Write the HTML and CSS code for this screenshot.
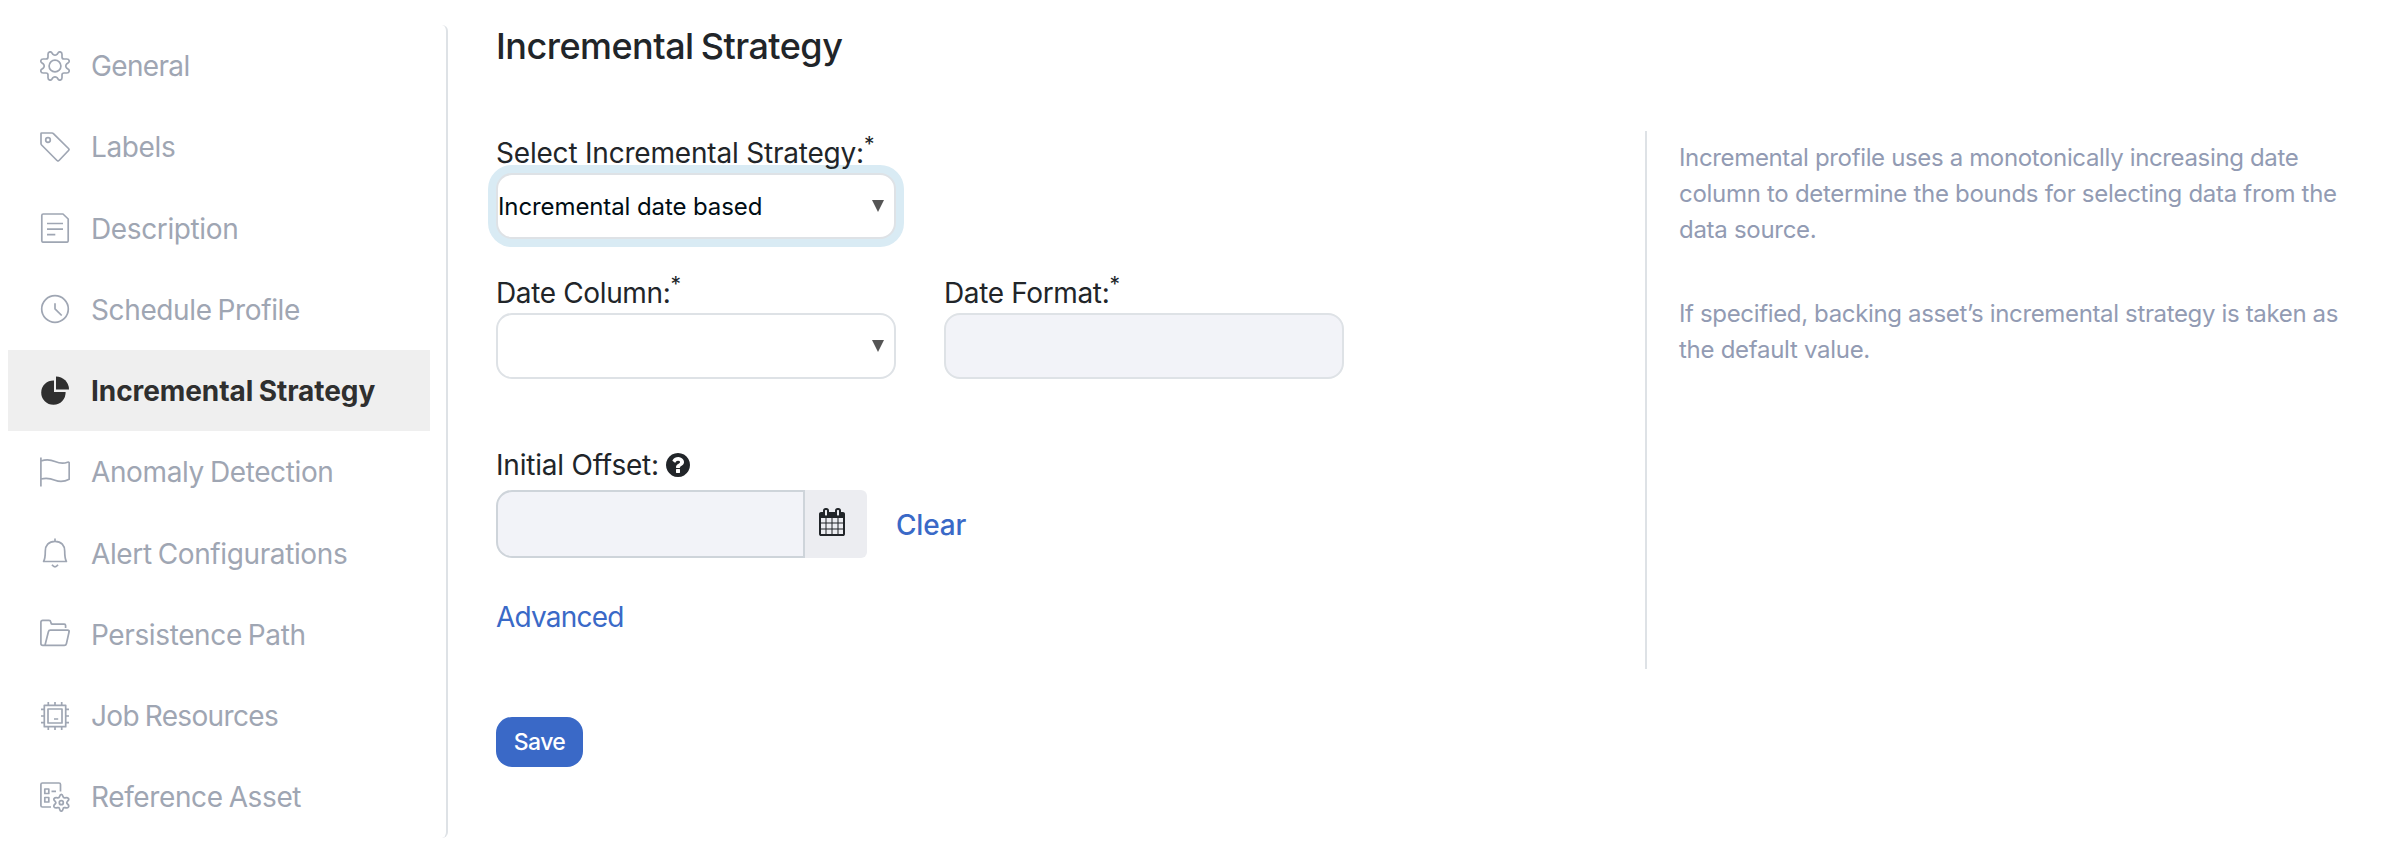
FILE: index.html
```
<!DOCTYPE html>
<html lang="en">
<head>
<meta charset="utf-8">
<title>Incremental Strategy</title>
<link rel="stylesheet" href="styles.css">
</head>
<body>
<div class="page">
  <nav class="sidebar">
    <a class="item tight"><svg class="icon" viewBox="0 0 30 30"><path d="M8 6V3.200Q8 1 10 .8Q11.300 .7 12 2L13 3.400Q15 5 17 3.400L18 2Q18.700 .7 20 .8Q22 1 22 3.200V6Q22 8 24 8H26.800Q29 8 29.200 10Q29.300 11.300 28 12L26.600 13Q25 15 26.600 17L28 18Q29.300 18.700 29.200 20Q29 22 26.800 22H24Q22 22 22 24V26.800Q22 29 20 29.200Q18.700 29.300 18 28L17 26.600Q15 25 13 26.600L12 28Q11.300 29.300 10 29.200Q8 29 8 26.800V24Q8 22 6 22H3.200Q1 22 .8 20Q.7 18.700 2 18L3.400 17Q5 15 3.400 13L2 12Q.7 11.300 .8 10Q1 8 3.200 8H6Q8 8 8 6Z"/><circle cx="15" cy="15" r="5.900"/></svg><span class="name">General</span></a>
    <a class="item"><svg class="icon" viewBox="0 0 30 30"><path d="M1.600 1H12Q12.800 1 13.400 1.600L28.500 16.500Q29.500 17.500 28.500 18.500L19 28.500Q18 29.500 17 28.500L1.600 13Q1 12.400 1 11.600V1.600Q1 1 1.600 1Z"/><circle cx="8" cy="8" r="2.300"/></svg><span class="name">Labels</span></a>
    <a class="item"><svg class="icon" viewBox="0 0 30 30"><path d="M3.300 1H23L28.200 6V27.700Q28.200 29.200 26.700 29.200H3.300Q1.800 29.200 1.800 27.700V2.500Q1.800 1 3.300 1M7 10.500H23M7 16.200H23M7 21.700H15.300"/></svg><span class="name">Description</span></a>
    <a class="item"><svg class="icon" viewBox="0 0 30 30"><circle cx="15" cy="15" r="13.300"/><path d="M15 9.300V14.800L21.700 21.500"/></svg><span class="name">Schedule Profile</span></a>
    <a class="item active"><svg class="icon solid" viewBox="0 0 30 30"><path d="M14 4.400V16H25.600A12.200 12.200 0 1 1 14 4.400Z"/><path d="M16 .4A13 13 0 0 1 29 13.400H16Z"/></svg><span class="name">Incremental Strategy</span></a>
    <a class="item"><svg class="icon" viewBox="0 0 30 30"><path d="M.9 .5V29.500M.9 4Q8 1.500 15 4.500T27.500 5.200Q29.200 4.700 29.200 6V22.200Q22 26 15 23.200T.9 22"/></svg><span class="name">Anomaly Detection</span></a>
    <a class="item"><svg class="icon" viewBox="0 0 30 30"><path d="M15 .5V3.300M15 3.300C8.500 3.300 5.300 7.500 5.300 13C5.300 18.500 5 21 3.600 23.500H26.400C25 21 24.700 18.500 24.700 13C24.700 7.500 21.500 3.300 15 3.300ZM12 26.800Q15 31 18 26.800"/></svg><span class="name">Alert Configurations</span></a>
    <a class="item"><svg class="icon" viewBox="0 0 30 30"><path d="M25.600 9V6.500Q25.600 5.200 24.300 5.200H12.500Q11.200 5.200 11 4L10.800 3Q10.500 1.300 9 1.300H2.800Q.9 1.300 .9 3.200V24.500Q.9 26.400 2.800 26.400H24.300Q26 26.400 26.400 24.700L29.100 12.800Q29.400 11.200 27.700 11.200H10.200Q8.800 11.200 8.400 12.700L5 26.200"/></svg><span class="name">Persistence Path</span></a>
    <a class="item tight"><svg class="icon" viewBox="0 0 30 30"><path d="M4.300 4.300H25.700V25.700H4.300ZM8 8H22V22H8ZM8.300 1V4.300M15 1V4.300M21.700 1V4.300M8.300 25.700V29M15 25.700V29M21.700 25.700V29M1 8.300H4.300M1 15H4.300M1 21.700H4.300M25.700 8.300H29M25.700 15H29M25.700 21.700H29M14 18H18.200"/></svg><span class="name">Job Resources</span></a>
    <a class="item"><svg class="icon" viewBox="0 0 30 30"><path d="M20.500 9.500V2.500Q20.500 1 19 1H2.400Q.9 1 .9 2.500V23.500Q.9 25 2.400 25H11M4.800 7H8.800V11.500H4.800ZM4.800 15.500H8.800V20H4.800ZM11.500 9.300H16M21.300 12.300Q22.500 12.300 23 14.500Q23.300 16 25 15.800Q27.500 15.200 28.500 16.500Q29.300 18 27.500 19.300Q26 20.700 27.500 22Q29.300 23.500 28.500 24.900Q27.500 26.200 25 25.600Q23.300 25.300 23 27Q22.500 29.200 21.300 29.200Q20.100 29.200 19.600 27Q19.300 25.300 17.600 25.600Q15.100 26.200 14.100 24.900Q13.300 23.500 15.100 22Q16.600 20.700 15.100 19.300Q13.300 18 14.100 16.500Q15.100 15.200 17.600 15.800Q19.300 16 19.600 14.500Q20.100 12.300 21.300 12.300Z"/><circle cx="21.300" cy="20.700" r="2"/></svg><span class="name">Reference Asset</span></a>
  </nav>
  <main class="main">
    <h1 class="title">Incremental Strategy</h1>
    <div class="columns">
      <form class="form">
        <div class="field">
          <label class="label">Select Incremental Strategy:<sup>*</sup></label>
          <div class="control select focused">Incremental date based<i class="caret"></i></div>
        </div>
        <div class="row">
          <div class="field">
            <label class="label short">Date Column:<sup>*</sup></label>
            <div class="control select"><i class="caret"></i></div>
          </div>
          <div class="field">
            <label class="label short">Date Format:<sup>*</sup></label>
            <div class="control disabled"></div>
          </div>
        </div>
        <div class="offset">
          <label class="label">Initial Offset:<svg class="help" viewBox="128 128 1536 1536"><path d="M1024 1376v-192q0-14-9-23t-23-9h-192q-14 0-23 9t-9 23v192q0 14 9 23t23 9h192q14 0 23-9t9-23zm256-672q0-88-55.500-163t-138.500-116-170-41q-243 0-371 213-15 24 8 42l132 100q7 6 19 6 16 0 25-12 53-68 86-92 34-24 86-24 48 0 85.500 26t37.500 59q0 38-20 61t-68 45q-63 28-115.500 86.500t-52.500 125.500v36q0 14 9 23t23 9h192q14 0 23-9t9-23q0-19 21.500-49.500t54.500-49.500q32-18 49-28.500t46-35 44.500-48 28-60.500 12.500-81zm384 192q0 209-103 385.500t-279.500 279.500-385.500 103-385.500-103-279.500-279.500-103-385.500 103-385.500 279.500-279.500 385.500-103 385.500 103 279.500 279.500 103 385.500z"/></svg></label>
          <div class="picker">
            <div class="date"></div>
            <div class="addon"><svg class="calendar" viewBox="64 0 1664 1792"><path d="M192 1664h288v-288h-288v288zm352 0h320v-288h-320v288zm-352-352h288v-320h-288v320zm352 0h320v-320h-320v320zm-352-384h288v-288h-288v288zm736 736h320v-288h-320v288zm-384-736h320v-288h-320v288zm768 736h288v-288h-288v288zm-384-352h320v-320h-320v320zm-352-864v-288q0-13-9.500-22.500t-22.500-9.500h-64q-13 0-22.500 9.500t-9.500 22.500v288q0 13 9.500 22.500t22.500 9.500h64q13 0 22.500-9.500t9.500-22.500zm736 864h288v-320h-288v320zm-384-384h320v-288h-320v288zm384 0h288v-288h-288v288zm32-480v-288q0-13-9.500-22.500t-22.500-9.500h-64q-13 0-22.500 9.500t-9.500 22.500v288q0 13 9.500 22.500t22.500 9.500h64q13 0 22.500-9.500t9.500-22.500zm384-64v1280q0 52-38 90t-90 38h-1408q-52 0-90-38t-38-90v-1280q0-52 38-90t90-38h128v-96q0-66 47-113t113-47h64q66 0 113 47t47 113v96h384v-96q0-66 47-113t113-47h64q66 0 113 47t47 113v96h128q52 0 90 38t38 90z"/></svg></div>
            <a class="clear">Clear</a>
          </div>
        </div>
        <a class="advanced">Advanced</a>
      </form>
      <aside class="help-text">
        <p><span class="dense">Incremental profile uses a monotonically increasing date</span><br>column to determine the bounds for selecting data from the<br>data source.</p>
        <p><span class="dense">If specified, backing asset’s incremental strategy is taken as</span><br>the default value.</p>
      </aside>
    </div>
    <button class="save">Save</button>
  </main>
</div>
</body>
</html>
```
FILE: styles.css
```
* { box-sizing: border-box; }
body { margin: 0; background: #fff; color: #212529; font-family: Inter, "Liberation Sans", sans-serif; font-size: 28px; }
.page { display: flex; width: 2390px; height: 852px; padding-top: 25px; white-space: nowrap; }
.sidebar { width: 448px; height: 812.5px; padding: 0 16px 0 8px; border-right: 2px solid #dee2e6; border-radius: 6px; display: flex; flex-direction: column; }
.item { flex: 1; display: flex; align-items: center; gap: 21px; padding-left: 32px; color: #9fa6b3; letter-spacing: -.38px; word-spacing: -1.5px; }
.item.tight { letter-spacing: -.65px; }
.name { padding-top: 1px; }
.icon { width: 30px; height: 30px; fill: none; stroke: currentColor; stroke-width: 1.7; stroke-linejoin: round; stroke-linecap: butt; }
.icon.solid { fill: currentColor; stroke: none; }
.item.active { background: #efefef; color: #2f2f2f; font-weight: 700; letter-spacing: -.08px; word-spacing: -1px; }
.main { padding-left: 48px; flex: 1; }
.title { margin: 0; font-size: 36px; font-weight: 500; line-height: 42px; height: 106px; letter-spacing: -.52px; word-spacing: -2px; }
.columns { display: flex; height: 538px; }
.form { width: 1149px; }
.field { width: 400px; }
.label { display: flex; height: 42px; line-height: 44px; letter-spacing: -.2px; }
.label.short { letter-spacing: -.36px; }
.field .label { position: relative; z-index: 1; }
sup { font-size: 21px; line-height: 28px; }
.control { display: flex; align-items: center; justify-content: space-between; width: 400px; height: 66px; border: 2px solid #dee2e6; border-radius: 16px; background: #fff; }
.select { padding-right: 10px; font-size: 24px; color: #000d14; letter-spacing: -.1px; }
.focused { box-shadow: 0 0 0 8px #d9ebf4; }
.caret { margin-left: auto; width: 12px; height: 12px; background: #555; clip-path: polygon(0 0, 100% 0, 50% 100%); }
.disabled { background: #f2f3f8; }
.row { display: flex; gap: 48px; margin-top: 32px; }
.offset { margin-top: 64px; }
.help { width: 24px; height: 24px; margin: 10px 0 0 7px; fill: #212529; }
.picker { display: flex; align-items: center; margin-top: 5px; height: 68px; }
.date { width: 309px; height: 68px; border: 2px solid #ced4da; border-radius: 16px 0 0 16px; background: #f2f3f8; }
.addon { width: 62px; height: 68px; padding: 18px 14px; border-radius: 0 6px 6px 0; background: #ecedf1; }
.calendar { display: block; width: 26px; height: 28px; fill: #212529; }
.clear { margin-left: 29px; padding-top: 2px; color: #3a69c7; font-weight: 500; letter-spacing: -.2px; }
.advanced { display: block; margin-top: 42px; line-height: 34px; color: #3a69c7; letter-spacing: -.8px; }
.help-text { border-left: 2px solid #dee2e6; padding: 9px 0 0 32px; font-size: 24px; line-height: 36px; color: #929bb3; letter-spacing: -.29px; }
.help-text p { margin: 0 0 48px; }
.dense { letter-spacing: -.35px; }
.save { display: block; margin-top: 48px; width: 87px; height: 50px; padding: 0; border: 0; border-radius: 16px; background: #3a69c7; color: #fff; font: 500 23px/50px Inter, sans-serif; letter-spacing: -.6px; }
```
